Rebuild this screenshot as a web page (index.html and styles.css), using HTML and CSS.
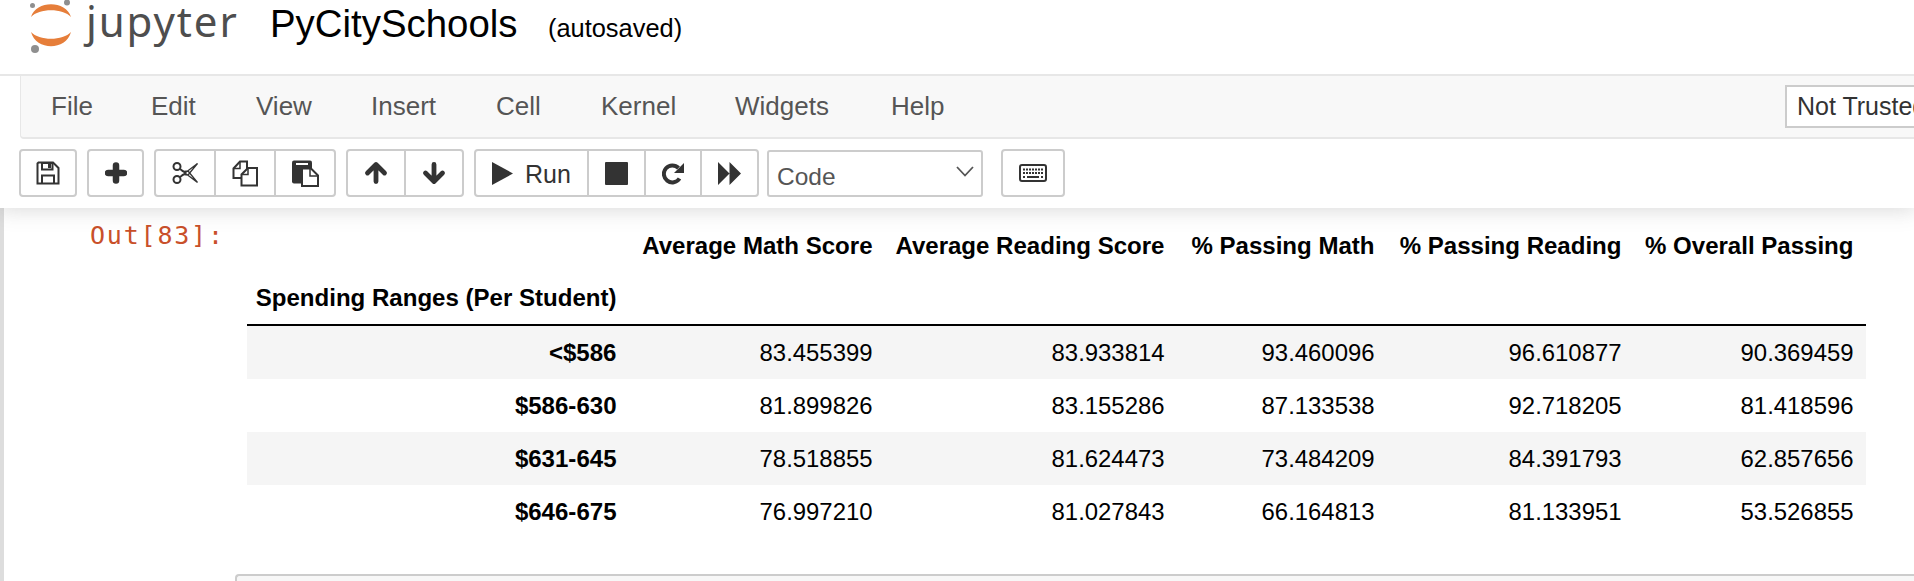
FILE: index.html
```html
<!DOCTYPE html>
<html lang="en">
<head>
<meta charset="utf-8">
<title>PyCitySchools</title>
<link rel="stylesheet" href="styles.css">
</head>
<body>
<header class="top">
  <div class="brand">
    <a class="logo">
      <svg class="logo-mark" width="44" height="54" viewBox="0 0 44 54">
        <path d="M1 17C6 0 36 0 41 17C33 8 9 8 1 17Z" fill="#e67e3a"/>
        <path d="M1 32C9 41 33 41 41 32C36 51 6 51 1 32Z" fill="#e67e3a"/>
        <circle cx="2.500" cy="5.500" r="2.500" fill="#8f8f8f"/>
        <circle cx="37" cy="2.500" r="3" fill="#8f8f8f"/>
        <circle cx="5" cy="49" r="4" fill="#8f8f8f"/>
      </svg>
      <span class="logo-word">jupyter</span>
    </a>
    <span class="nb-name">PyCitySchools</span>
    <span class="autosave">(autosaved)</span>
  </div>
  <nav class="menubar">
    <span class="menu-item m-file">File</span>
    <span class="menu-item m-edit">Edit</span>
    <span class="menu-item m-view">View</span>
    <span class="menu-item m-insert">Insert</span>
    <span class="menu-item m-cell">Cell</span>
    <span class="menu-item m-kernel">Kernel</span>
    <span class="menu-item m-widgets">Widgets</span>
    <span class="menu-item m-help">Help</span>
    <span class="trusted">Not Trusted</span>
  </nav>
  <div class="toolbar">
    <div class="group"><button class="btn w-save">
      <svg width="24" height="24" viewBox="0 0 24 24"><path d="M2.500 1.500H17L22.500 7V22.500H1.500V2.500Z" fill="none" stroke="#333" stroke-width="2"/><path d="M6 2V8.500H16.500V2Z" fill="none" stroke="#333" stroke-width="2"/><rect x="12" y="3" width="3" height="4" fill="#333"/><path d="M6 22V14.500H18V22" fill="none" stroke="#333" stroke-width="2"/></svg>
    </button></div>
    <div class="group"><button class="btn w-plus">
      <svg width="22" height="22" viewBox="0 0 22 22"><path d="M11 3.500V18.500M3 11H19" stroke="#333" stroke-width="6.500" stroke-linecap="round"/></svg>
    </button></div>
    <div class="group">
      <button class="btn w-cut">
        <svg width="27" height="24" viewBox="0 0 27 24"><circle cx="5" cy="5.500" r="3.500" fill="none" stroke="#333" stroke-width="2"/><circle cx="5" cy="18.500" r="3.500" fill="none" stroke="#333" stroke-width="2"/><path d="M8 8L11.500 10.500M8 16L11.500 13.500" stroke="#333" stroke-width="2"/><path d="M11 13.500L25.500 2.500L16 14L11 13.500ZM11 10.500L25.500 21.500L16 10Z" fill="#fff" stroke="#333" stroke-width="1.300"/></svg>
      </button>
      <button class="btn w-copy">
        <svg width="26" height="27" viewBox="0 0 26 27"><path d="M8 1.500H15V18H1.500V8.500Z" fill="#fff" stroke="#333" stroke-width="2"/><path d="M8 2V8.500H2" fill="none" stroke="#333" stroke-width="1.500"/><path d="M16 8H25V25.500H9.500V14.500Z" fill="#fff" stroke="#333" stroke-width="2"/><path d="M16 8.500V14.500H10" fill="none" stroke="#333" stroke-width="1.500"/></svg>
      </button>
      <button class="btn w-paste">
        <svg width="27" height="27" viewBox="0 0 27 27"><rect x="0" y="0.500" width="20" height="23" rx="2" fill="#333"/><rect x="4" y="3" width="12" height="2" fill="#fff"/><path d="M10 8.500H19L26 15.500V26H10Z" fill="#fff" stroke="#333" stroke-width="2"/><path d="M18 9V16H25" fill="none" stroke="#333" stroke-width="1.500"/></svg>
      </button>
    </div>
    <div class="group">
      <button class="btn w-up">
        <svg width="24" height="24" viewBox="0 0 24 24"><path d="M3.500 12L12 3.500L20.500 12M12 4V20.500" fill="none" stroke="#333" stroke-width="4.800" stroke-linecap="round" stroke-linejoin="round"/></svg>
      </button>
      <button class="btn w-down">
        <svg width="24" height="24" viewBox="0 0 24 24"><path d="M3.500 12L12 20.500L20.500 12M12 20V3.500" fill="none" stroke="#333" stroke-width="4.800" stroke-linecap="round" stroke-linejoin="round"/></svg>
      </button>
    </div>
    <div class="group">
      <button class="btn w-run">
        <svg width="21" height="23" viewBox="0 0 21 23"><path d="M0 0L21 11.500L0 23Z" fill="#333"/></svg>
        <span class="btn-label">Run</span>
      </button>
      <button class="btn w-stop">
        <svg width="23" height="23" viewBox="0 0 23 23"><rect width="23" height="23" rx="1" fill="#333"/></svg>
      </button>
      <button class="btn w-redo">
        <svg width="22" height="23" viewBox="0 0 22 23"><path d="M17.500 16.500A8.500 8.500 0 1 1 16.500 6" fill="none" stroke="#333" stroke-width="4"/><path d="M22 1V11H12Z" fill="#333"/></svg>
      </button>
      <button class="btn w-ff">
        <svg width="23" height="23" viewBox="0 0 23 23"><path d="M0 0L11.500 11.500L0 23ZM11.500 0L23 11.500L11.500 23Z" fill="#333"/></svg>
      </button>
    </div>
    <div class="cell-type">
      <span>Code</span>
      <svg width="18" height="11" viewBox="0 0 18 11"><path d="M1 1L9 9.500L17 1" fill="none" stroke="#555" stroke-width="1.800"/></svg>
    </div>
    <div class="group kbd-group"><button class="btn w-kbd">
      <svg width="28" height="18" viewBox="0 0 28 18"><rect x="1" y="1" width="26" height="16" rx="2" fill="none" stroke="#333" stroke-width="2"/><path d="M4 5.500H24M4 9H24" stroke="#333" stroke-width="2" stroke-dasharray="2 1"/><path d="M4 13H6M8 13H20M22 13H24" stroke="#333" stroke-width="2"/></svg>
    </button></div>
  </div>
</header>
<main class="notebook">
  <div class="output">
    <div class="prompt">Out[83]:</div>
    <table class="frame">
      <colgroup>
        <col class="c-idx"><col class="c-math"><col class="c-read"><col class="c-pm"><col class="c-pr"><col class="c-po">
      </colgroup>
      <thead>
        <tr>
          <th></th>
          <th>Average Math Score</th>
          <th>Average Reading Score</th>
          <th>% Passing Math</th>
          <th>% Passing Reading</th>
          <th>% Overall Passing</th>
        </tr>
        <tr class="names">
          <th>Spending Ranges (Per Student)</th>
          <th></th><th></th><th></th><th></th><th></th>
        </tr>
      </thead>
      <tbody>
        <tr><th>&lt;$586</th><td>83.455399</td><td>83.933814</td><td>93.460096</td><td>96.610877</td><td>90.369459</td></tr>
        <tr><th>$586-630</th><td>81.899826</td><td>83.155286</td><td>87.133538</td><td>92.718205</td><td>81.418596</td></tr>
        <tr><th>$631-645</th><td>78.518855</td><td>81.624473</td><td>73.484209</td><td>84.391793</td><td>62.857656</td></tr>
        <tr><th>$646-675</th><td>76.997210</td><td>81.027843</td><td>66.164813</td><td>81.133951</td><td>53.526855</td></tr>
      </tbody>
    </table>
  </div>
  <div class="next-cell"></div>
</main>
</body>
</html>
```
FILE: styles.css
```css
* { box-sizing: border-box; }
html, body { margin: 0; padding: 0; }
body {
  width: 1914px;
  height: 581px;
  overflow: hidden;
  background: #fff;
  font-family: "Liberation Sans", Arial, sans-serif;
  display: flex;
  flex-direction: column;
}
.top {
  height: 208px;
  flex: none;
  background: #fff;
  position: relative;
  z-index: 2;
  box-shadow: 0 0 20px 2px rgba(87, 87, 87, .22);
}
.brand {
  height: 76px;
  border-bottom: 2px solid #e7e7e7;
  display: flex;
  overflow: hidden;
}
.logo { display: flex; margin-left: 30px; width: 240px; }
.logo-mark { flex: none; }
.logo-word {
  font-family: "Noto Sans", sans-serif;
  font-size: 42px;
  line-height: 42px;
  letter-spacing: 1.900px;
  color: #4e4e4e;
  margin-left: 12px;
}
.nb-name {
  font-size: 38.400px;
  line-height: 48px;
  color: #000;
  width: 278px;
  flex: none;
}
.autosave {
  font-size: 25.400px;
  line-height: 56px;
  color: #000;
}
.menubar {
  height: 63px;
  margin-left: 20px;
  background: #f8f8f8;
  border-left: 1px solid #e7e7e7;
  border-bottom: 2px solid #e7e7e7;
  border-bottom-left-radius: 4px;
  display: flex;
  align-items: center;
  overflow: hidden;
}
.menu-item { font-size: 26px; color: #555; flex: none; }
.m-file { margin-left: 30px; width: 100px; }
.m-edit { width: 105px; }
.m-view { width: 115px; }
.m-insert { width: 125px; }
.m-cell { width: 105px; }
.m-kernel { width: 134px; }
.m-widgets { width: 156px; }
.m-help { width: 0; white-space: nowrap; }
.trusted {
  margin-left: 894px;
  flex: none;
  width: 200px;
  height: 43px;
  margin-top: -1px;
  background: #fff;
  border: 2px solid #ccc;
  font-size: 25px;
  line-height: 39px;
  padding-left: 10px;
  color: #333;
  white-space: nowrap;
}
.toolbar {
  display: flex;
  margin-top: 10px;
  margin-left: 19px;
  height: 48px;
  gap: 10px;
}
.group {
  display: flex;
  border: 2px solid #ccc;
  border-radius: 4px;
  background: #fff;
  flex: none;
}
.btn {
  border: 0;
  background: transparent;
  padding: 0;
  margin: 0;
  height: 44px;
  display: flex;
  align-items: center;
  justify-content: center;
  font-family: inherit;
  color: #333;
}
.btn + .btn { border-left: 2px solid #ccc; }
.w-save { width: 54px; }
.w-plus { width: 53px; }
.w-cut { width: 58px; }
.w-copy { width: 60px; }
.w-paste { width: 60px; }
.w-up { width: 56px; }
.w-down { width: 58px; }
.w-run { width: 111px; justify-content: flex-start; padding-left: 16px; }
.w-stop { width: 57px; }
.w-redo { width: 56px; }
.w-ff { width: 57px; }
.btn-label { font-size: 25px; margin-left: 12px; padding-top: 3px; }
.cell-type {
  flex: none;
  width: 216px;
  margin-left: -2px;
  height: 47px;
  margin-top: 1px;
  border: 2px solid #ccc;
  border-radius: 3px;
  background: #fff;
  display: flex;
  align-items: center;
  justify-content: space-between;
  padding: 0 7px 0 8px;
  font-size: 24.500px;
  color: #555;
}
.cell-type span { padding-top: 7px; }
.cell-type svg { margin-top: -4px; }
.kbd-group { margin-left: 8px; }
.w-kbd { width: 60px; }
.notebook {
  flex: 1;
  min-height: 0;
  border-left: 4px solid #ddd;
  display: flex;
  flex-direction: column;
}
.output {
  display: flex;
  align-items: flex-start;
  padding-top: 11px;
}
.prompt {
  flex: none;
  width: 243px;
  padding-left: 86px;
  padding-top: 2px;
  font-family: "DejaVu Sans Mono", monospace;
  font-size: 25px;
  letter-spacing: 1.800px;
  line-height: 30px;
  color: #c9502a;
}
.frame {
  border-collapse: separate;
  border-spacing: 0;
  table-layout: fixed;
  width: 1619px;
  font-size: 23.900px;
  color: #000;
  flex: none;
}
.c-idx { width: 382px; }
.c-math { width: 256px; }
.c-read { width: 292px; }
.c-pm { width: 210px; }
.c-pr { width: 247px; }
.c-po { width: 232px; }
.frame th, .frame td {
  padding: 0 12.500px 0 0;
  text-align: right;
  white-space: nowrap;
  height: 53px;
}
.frame th { font-weight: 700; font-size: 24.050px; }
.frame td { font-weight: 400; }
.frame .names th { border-bottom: 2px solid #000; height: 54px; }
.frame tbody tr:nth-child(odd) { background: #f5f5f5; }
.next-cell {
  flex: 1;
  margin-top: 36px;
  margin-left: 231px;
  background: #f7f7f7;
  border: 2px solid #ccc;
  border-right: 0;
  border-bottom: 0;
  border-top-left-radius: 4px;
}
```
